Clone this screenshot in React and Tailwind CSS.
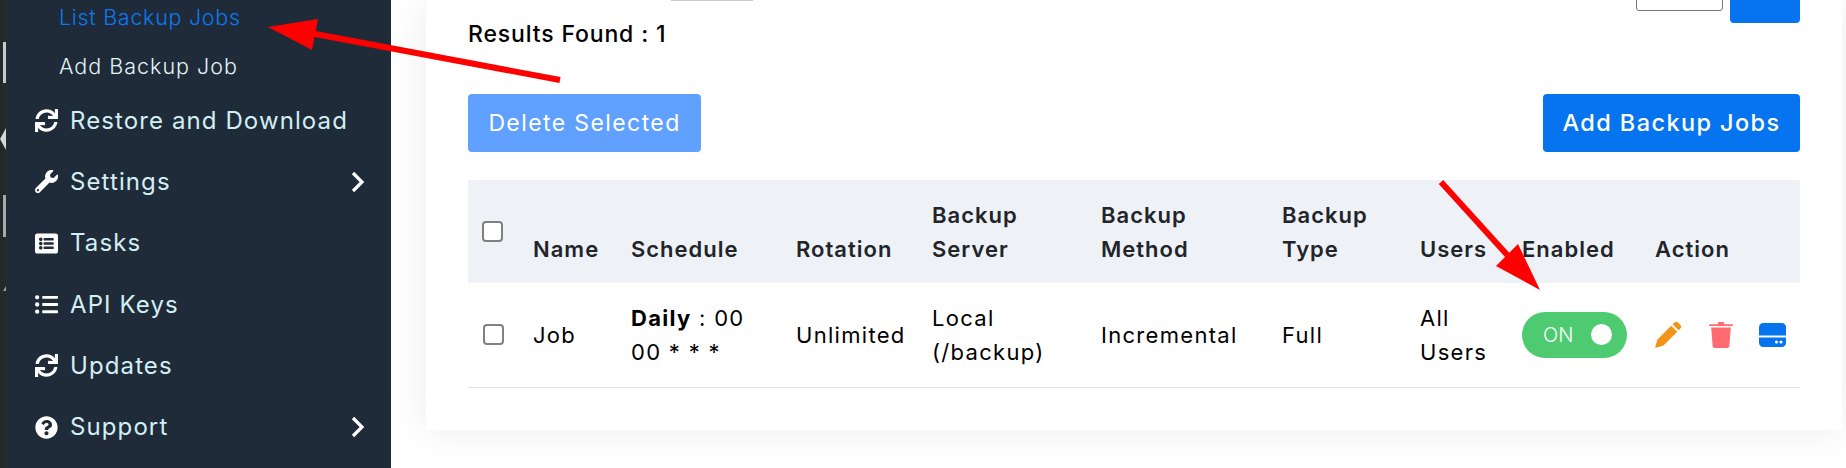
import React from "react";
import { FaSync, FaWrench, FaListAlt, FaListUl, FaQuestionCircle } from "react-icons/fa";

function NavItem({ icon: Icon, label, chevron }) {
  return (
    <div className="h-[61.3px] flex items-center pl-[29px] pr-[26px] text-[#d3eff3] text-[24px] tracking-[1.1px]">
      <span className="w-[35px] shrink-0 flex text-white"><Icon size={23} /></span>
      <span className="flex-1">{label}</span>
      {chevron && <svg width="14" height="22" viewBox="0 0 14 22" fill="none" stroke="white" strokeWidth="3.2"><path d="M2 2l9 9-9 9" /></svg>}
    </div>
  );
}

const Check = ({ className }) => (
  <input type="checkbox" className={"appearance-none block w-[21px] h-[21px] bg-white border-2 border-[#808080] rounded-[4px] " + className} />
);

const TH = ({ w, children }) => (
  <th className={w + " p-0 pb-[17px] align-bottom text-left font-semibold text-[22px] leading-[34px] tracking-[1px] text-[#212529]"}>{children}</th>
);
const TD = ({ children }) => (
  <td className="p-0 align-middle text-[22px] leading-[34px] tracking-[1.3px] text-black">{children}</td>
);

export default function App() {
  return (
    <div className="relative h-[468px] w-[1846px] overflow-hidden flex bg-white font-['Inter','Liberation_Sans',sans-serif]">
      {/* window edge */}
      <div className="relative w-[6px] shrink-0 bg-[#25282b]">
        <div className="absolute left-[3px] top-[42px] w-[3px] h-[41px] bg-[#c9c9c9]" />
        <div className="absolute left-0 top-[128px] w-0 h-0 border-y-[11px] border-y-transparent border-r-[6px] border-r-[#d8d8d8]" />
        <div className="absolute left-[3px] top-[195px] w-[3px] h-[42px] bg-[#a9a9a9]" />
        <div className="absolute left-[3px] top-[286px] w-0 h-0 border-b-[5px] border-b-[#9a9a9a] border-l-[3px] border-l-transparent" />
      </div>

      {/* sidebar */}
      <aside className="w-[385px] shrink-0 bg-[#1f2b38] overflow-hidden">
        <div className="-mt-[8px] pl-[53px] text-[21.5px] font-light tracking-[0.7px] h-[49px] leading-[50px] text-[#0b78f5]">List Backup Jobs</div>
        <div className="pl-[53px] text-[21.5px] font-light tracking-[1px] h-[49px] leading-[50px] text-[#e2f4f7]">Add Backup Job</div>
        <div>
          <NavItem icon={FaSync} label="Restore and Download" />
          <NavItem icon={FaWrench} label="Settings" chevron />
          <NavItem icon={FaListAlt} label="Tasks" />
          <NavItem icon={FaListUl} label="API Keys" />
          <NavItem icon={FaSync} label="Updates" />
          <NavItem icon={FaQuestionCircle} label="Support" chevron />
        </div>
      </aside>

      {/* main */}
      <main className="flex-1 min-w-0 bg-white pl-[35px] pr-[4px]">
        <div className="h-[430px] overflow-hidden bg-white pl-[42px] pr-[42px] shadow-[0_0_40px_rgba(0,0,0,0.08)]">
          <div className="-mt-[37px] h-[60px] flex items-end">
            <div className="self-end mb-[22px] ml-[203px] w-[82px] h-[1px] bg-[#c8c8c8]" />
            <div className="ml-auto mb-[18px] text-[21px] leading-[34px] text-black">Go to Page</div>
            <input className="block ml-[91px] mb-[12px] w-[87px] h-[34px] bg-white border border-[#777] rounded-[3px]" />
            <button className="ml-[7px] w-[70px] h-[46px] bg-[#0674ef] rounded-[4px]" />
          </div>
          <div className="mt-[-6px] h-[34px] leading-[34px] text-[23px] font-medium tracking-[0.85px] text-black">Results Found : 1</div>
          <div className="mt-[43px] flex justify-between">
            <button className="w-[233px] h-[58px] rounded-[4px] bg-[#60a1ff] text-white text-[23px] tracking-[1.4px]">Delete Selected</button>
            <button className="w-[257px] h-[58px] rounded-[4px] bg-[#0674ef] text-white text-[23.5px] font-medium tracking-[1.4px]">Add Backup Jobs</button>
          </div>
          <table className="mt-[28px] w-[1332px] table-fixed border-collapse">
            <thead>
              <tr className="h-[103px] bg-[#eef1f6]">
                <th className="w-[65px] p-0 pb-[41px] align-bottom"><Check className="ml-[14px]" /></th>
                <TH w="w-[98px]">Name</TH>
                <TH w="w-[165px]">Schedule</TH>
                <TH w="w-[136px]">Rotation</TH>
                <TH w="w-[169px]">Backup<br />Server</TH>
                <TH w="w-[181px]">Backup<br />Method</TH>
                <TH w="w-[138px]">Backup<br />Type</TH>
                <TH w="w-[102px]">Users</TH>
                <TH w="w-[133px]">Enabled</TH>
                <TH w="w-[145px]">Action</TH>
              </tr>
            </thead>
            <tbody>
              <tr className="h-[104px] border-b border-[#dee2e6]">
                <TD><Check className="ml-[15px]" /></TD>
                <TD>Job</TD>
                <TD><b className="font-bold">Daily</b> : 00<br />00 * * *</TD>
                <TD>Unlimited</TD>
                <TD>Local<br />(/backup)</TD>
                <TD>Incremental</TD>
                <TD>Full</TD>
                <TD>All<br />Users</TD>
                <TD>
                  <div className="w-[105px] h-[46px] rounded-full bg-[#4ecb71] flex items-center justify-between pl-[21px] pr-[15px] text-white text-[20px] tracking-normal font-light">
                    <span>ON</span>
                    <span className="w-[21px] h-[21px] rounded-full bg-white" />
                  </div>
                </TD>
                <TD>
                  <div className="flex items-center">
                    <svg width="27" height="27" viewBox="0 0 27 27" fill="#f39317">
                      <path d="M19.6 1.3c.9-.9 2.2-.9 3.1 0l2.9 2.9c.9.9.9 2.2 0 3.1l-2 2-6-6z" />
                      <path d="M16.2 4.8l6 6L8.5 24.5 1 26.8c-.5.1-.9-.3-.8-.8l2.3-7.5z" />
                    </svg>
                    <svg className="ml-[27px]" width="24" height="27" viewBox="0 0 24 27" fill="#ff6b70">
                      <path d="M1 3.2h7.5L9.5 1h5l1 2.2H23c.6 0 .9.4.9 1v.9H.1v-.9c0-.6.4-1 .9-1z" />
                      <path d="M2.2 6.5h19.6l-1.4 18.6c-.1 1-.9 1.9-2 1.9H5.6c-1.1 0-1.9-.9-2-1.9z" />
                    </svg>
                    <svg className="ml-[26px]" width="27" height="24" viewBox="0 0 27 24" fill="#0674ef">
                      <path d="M4 0h19c2 0 4 2 4 4v8.5H0V4c0-2 2-4 4-4z" />
                      <path d="M0 14.5h27V20c0 2-2 4-4 4H4c-2 0-4-2-4-4z" />
                      <circle cx="17.5" cy="19" r="1.6" fill="white" /><circle cx="22" cy="19" r="1.6" fill="white" />
                    </svg>
                  </div>
                </TD>
              </tr>
            </tbody>
          </table>
        </div>
      </main>

      {/* annotation arrows */}
      <svg className="absolute left-0 top-0 pointer-events-none" width="1846" height="468" viewBox="0 0 1846 468" fill="#ff0000">
        <path d="M310 33 L560 80" stroke="#ff0000" strokeWidth="6" />
        <polygon points="268,27 318,19 312,50" />
        <path d="M1441 182 L1510 258" stroke="#ff0000" strokeWidth="6" />
        <polygon points="1540,290 1496,266 1518,244" />
      </svg>
    </div>
  );
}
